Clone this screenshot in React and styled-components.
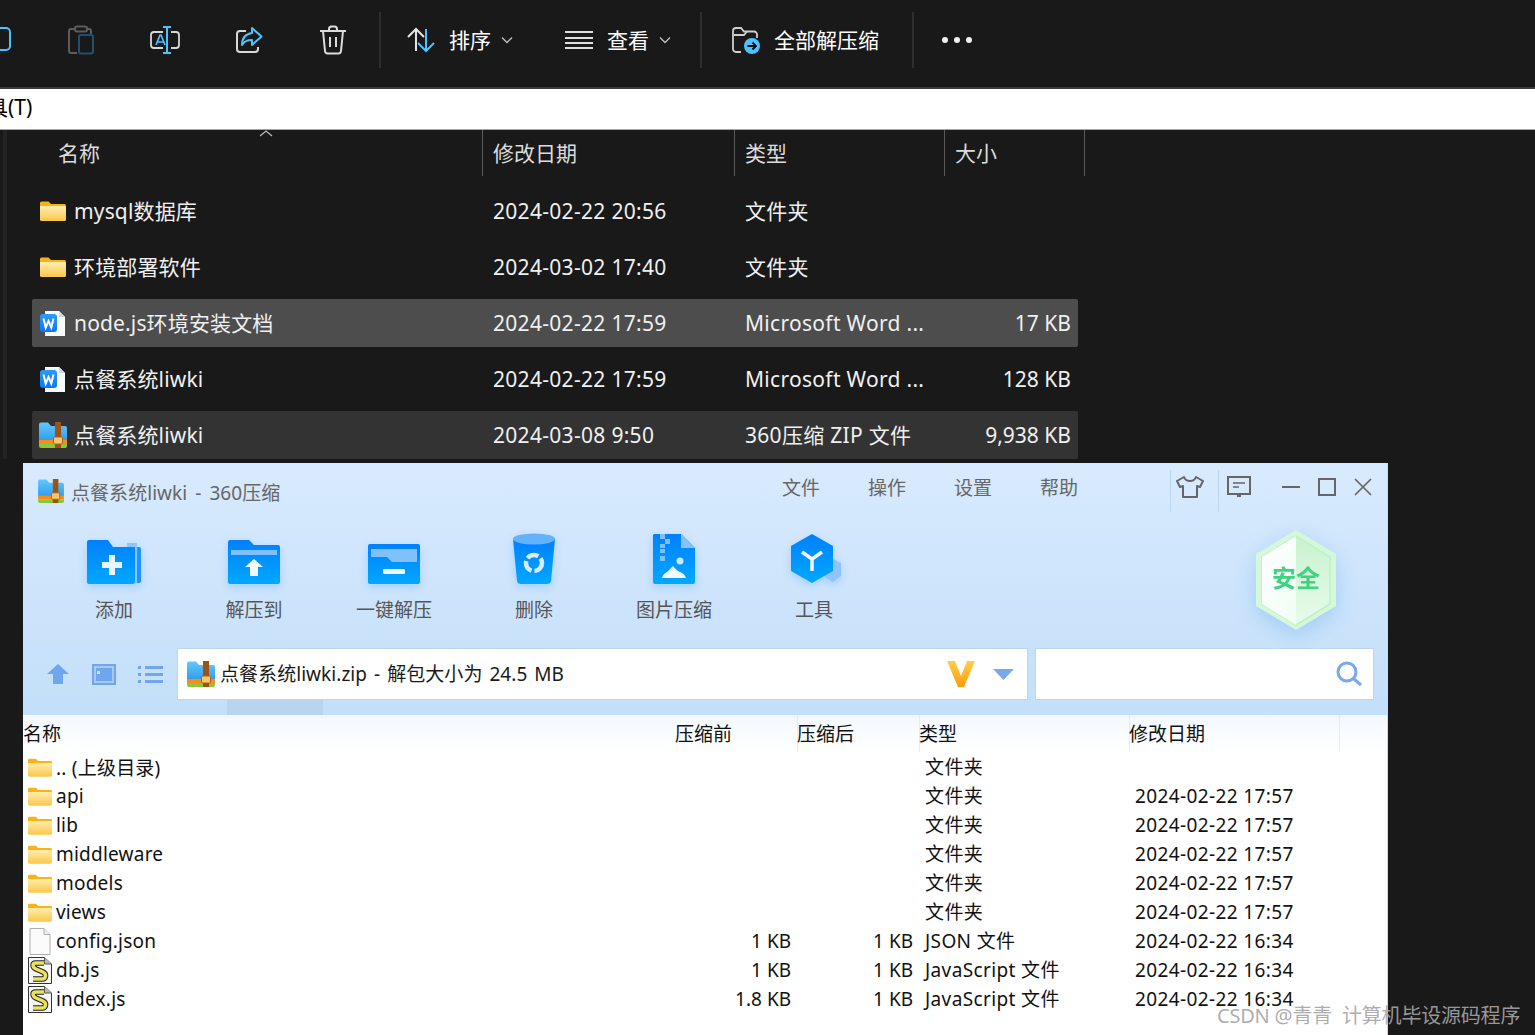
import React from "react";
import styled, { createGlobalStyle } from "styled-components";

const FONT = `"Noto Sans", "Noto Sans CJK SC", sans-serif`;

const Global = createGlobalStyle`
  html, body { margin: 0; padding: 0; background: #191919; font-family: ${FONT}; overflow: hidden; }
  * { box-sizing: border-box; }
`;

const Page = styled.div`
  position: relative;
  width: 1535px;
  height: 1035px;
  overflow: hidden;
  display: flex;
  flex-direction: column;
  background: #191919;
`;
const HiddenDefs = styled.svg`
  position: absolute;
  width: 0;
  height: 0;
`;

/* ---------- Explorer command bar ---------- */
const CommandBar = styled.div`
  height: 87px;
  padding-bottom: 7px;
  display: flex;
  align-items: center;
  margin-left: -45px;
  color: #fff;
  font-size: 21px;
  flex: none;
`;
const CommandIcon = styled.div`
  width: 84px;
  height: 40px;
  display: flex;
  align-items: center;
  justify-content: center;
  flex: none;
`;
const CommandSep = styled.div`
  width: 2px;
  height: 56px;
  background: #2e2e2e;
  margin: 0 0 0 ${p => p.$left ?? 0}px;
  flex: none;
`;
const CommandButton = styled.div`
  display: flex;
  align-items: center;
  width: ${p => p.$w}px;
  padding-left: ${p => p.$pad}px;
  height: 40px;
  flex: none;
`;
const CommandLabel = styled.span`
  margin-left: 14px;
  white-space: nowrap;
  line-height: 28px;
`;
const ChevronSlot = styled.span`
  margin-left: 10px;
  display: flex;
`;
const Dots = styled.div`
  margin-left: 28px;
  display: flex;
  gap: 6px;
`;
const Dot = styled.i`
  width: 6px;
  height: 6px;
  border-radius: 50%;
  background: #f2f2f2;
`;

/* ---------- Explorer address + list ---------- */
const MenuStrip = styled.div`
  flex: none;
  height: 43px;
  background: #fff;
  border-top: 2px solid #3a3a3a;
  border-bottom: 1px solid #a8a8a8;
  padding-bottom: 7px;
  display: flex;
  align-items: center;
  color: #000;
  font-size: 21px;
`;
const MenuText = styled.span`
  margin-left: -13px;
  white-space: nowrap;
`;
const Pane = styled.div`
  flex: none;
  height: 329px;
  margin-left: 3px;
  border-left: 4px solid #232323;
  font-size: 21px;
  color: #e8e8e8;
`;
const ColumnHead = styled.div`
  display: flex;
  height: 46px;
  position: relative;
`;
const HeadCell = styled.div`
  width: ${p => p.$w}px;
  padding-left: ${p => p.$pad}px;
  padding-bottom: 3px;
  border-right: 1px solid #5a5a5a;
  display: flex;
  align-items: center;
  color: #dcdcdc;
  flex: none;
`;
const SortCaret = styled.svg`
  position: absolute;
  left: 252px;
  top: 0;
`;
const FileRows = styled.div`
  display: flex;
  flex-direction: column;
  gap: 8px;
  padding: 11px 0 0 25px;
`;
const FileRow = styled.div`
  width: 1046px;
  height: 48px;
  display: grid;
  grid-template-columns: 461px 252px 210px 123px;
  align-items: center;
  border-radius: 2px;
  background: ${p => p.$bg || "transparent"};
  color: #f0f0f0;
`;
const NameCell = styled.div`
  display: flex;
  align-items: center;
  padding-left: 6px;
  padding-bottom: 2px;
  gap: 6px;
  white-space: nowrap;
  letter-spacing: 0.15px;
`;
const IconSlot = styled.span`
  width: 30px;
  display: flex;
  justify-content: center;
  flex: none;
  padding-top: 2px;
`;
const PlainCell = styled.div`
  white-space: nowrap;
  letter-spacing: 0.3px;
  padding-bottom: ${p => (p.$cjk ? 2 : 0)}px;
`;
const SizeCell = styled.div`
  text-align: right;
  padding-right: 7px;
  white-space: nowrap;
`;

/* ---------- 360 archive window ---------- */
const ArcWindow = styled.div`
  flex: none;
  margin: 4px 0 0 23px;
  width: 1365px;
  height: 572px;
  background: #fff;
  border-right: 1px solid #c4dcf4;
  display: flex;
  flex-direction: column;
`;
const ArcChrome = styled.div`
  height: 252px;
  flex: none;
  background: linear-gradient(180deg, #d8eafe 0%, #c3dff9 100%);
  display: flex;
  flex-direction: column;
`;
const TitleBar = styled.div`
  height: 67px;
  flex: none;
  padding: 7px 6px 0 14px;
  display: flex;
  align-items: flex-start;
  color: #666;
  font-size: 19px;
`;
const TitleGroup = styled.div`
  height: 42px;
  display: flex;
  align-items: center;
  gap: 6px;
  white-space: nowrap;
`;
const TitleText = styled.span`
  margin-top: 2px;
  letter-spacing: 0.05px;
  word-spacing: 3px;
`;
const MenuGroup = styled.div`
  margin-left: auto;
  margin-right: 44px;
  display: flex;
`;
const MenuItem = styled.div`
  width: 86px;
  height: 34px;
  display: flex;
  align-items: center;
`;
const TitleSep = styled.div`
  width: 1px;
  height: 42px;
  background: #bdd6ee;
  flex: none;
`;
const TitleCell = styled.div`
  width: ${p => p.$w}px;
  margin-right: ${p => p.$mr ?? 0}px;
  height: 34px;
  display: flex;
  align-items: center;
  justify-content: center;
  flex: none;
`;
const ToolRow = styled.div`
  height: 105px;
  flex: none;
  padding: 4px 51px 0 21px;
  display: flex;
  position: relative;
`;
const Tool = styled.div`
  width: 140px;
  display: flex;
  flex-direction: column;
  align-items: center;
  color: #555;
  font-size: 19px;
`;
const ToolIcon = styled.div`
  height: 50px;
  display: flex;
  align-items: flex-end;
  justify-content: center;
  filter: drop-shadow(0 3px 4px rgba(0, 130, 255, 0.22));
`;
const ToolLabel = styled.div`
  margin-top: 14px;
  line-height: 24px;
  white-space: nowrap;
`;
const Shield = styled.div`
  margin-left: auto;
  margin-top: -4px;
  width: 80px;
  height: 100px;
  position: relative;
  filter: drop-shadow(0 6px 10px rgba(90, 160, 235, 0.35));
`;
const ShieldText = styled.div`
  position: absolute;
  left: 0;
  right: 0;
  top: 31px;
  text-align: center;
  font-size: 24px;
  font-weight: 700;
  line-height: 34px;
  color: #3fd280;
`;
const NavBar = styled.div`
  margin-top: 13px;
  height: 52px;
  flex: none;
  padding-left: 12px;
  display: flex;
  align-items: center;
`;
const NavIcon = styled.div`
  width: 46px;
  display: flex;
  justify-content: center;
  flex: none;
`;
const PathBox = styled.div`
  margin-left: 4px;
  width: 851px;
  height: 52px;
  background: #fff;
  border: 1px solid #bcd7f2;
  display: flex;
  align-items: center;
  padding: 0 13px 0 9px;
  font-size: 19px;
  color: #1a1a1a;
  flex: none;
`;
const PathText = styled.span`
  margin-left: 5px;
  margin-bottom: 3px;
  white-space: nowrap;
  flex: 1;
  letter-spacing: 0.05px;
  word-spacing: 2px;
`;
const VBadge = styled.span`
  margin-right: 18px;
  display: flex;
`;
const SearchBox = styled.div`
  margin-left: 7px;
  width: 339px;
  height: 52px;
  background: #fff;
  border: 1px solid #bcd7f2;
  display: flex;
  align-items: center;
  justify-content: flex-end;
  padding-right: 10px;
  flex: none;
`;
const NavStrip = styled.div`
  height: 15px;
  flex: none;
  padding-left: 204px;
`;
const NavTab = styled.div`
  width: 96px;
  height: 15px;
  background: #b9d4ee;
`;
const ListHead = styled.div`
  height: 37px;
  flex: none;
  display: grid;
  grid-template-columns: 652px 122px 122px 210px 210px 1fr;
  background: linear-gradient(180deg, #f3f8fe 0%, #ffffff 100%);
  font-size: 19px;
  color: #111;
`;
const ListHeadCell = styled.div`
  display: flex;
  align-items: center;
  padding-bottom: 1px;
  box-shadow: ${p => (p.$rule ? "inset 1px 0 0 #e3edf7" : "none")};
`;
const ListRow = styled.div`
  height: 29px;
  flex: none;
  display: grid;
  grid-template-columns: 652px 122px 122px 210px 210px;
  align-items: center;
  font-size: 19px;
  color: #111;
  white-space: nowrap;
`;
const ListName = styled.div`
  display: flex;
  align-items: center;
  padding-left: 5px;
  gap: 4px;
  letter-spacing: 0.22px;
`;
const ListIcon = styled.span`
  width: 24px;
  height: 27px;
  display: flex;
  align-items: center;
  justify-content: center;
  flex: none;
`;
const ListNum = styled.div`
  text-align: right;
  padding-right: 6px;
`;
const ListText = styled.div`
  padding-left: 6px;
  padding-bottom: ${p => (p.$cjk ? 2 : 0)}px;
  letter-spacing: 0.38px;
`;
const Watermark = styled.div`
  position: absolute;
  left: 1217px;
  top: 1002px;
  font-size: 20px;
  line-height: 28px;
  letter-spacing: -0.2px;
  color: rgba(165, 165, 165, 0.92);
  white-space: pre;
`;

/* ---------- icons ---------- */
const Folder = ({ w = 26, h = 20 }) => (
  <svg width={w} height={h} viewBox="0 0 26 20">
    <path d="M0 2a1.500 1.500 0 0 1 1.500-1.500h7L11 3h13.500A1.500 1.500 0 0 1 26 4.500V8H0z" fill="#fab313" />
    <path d="M0 5h24.500A1.500 1.500 0 0 1 26 6.500v12a1.500 1.500 0 0 1-1.500 1.500h-23A1.500 1.500 0 0 1 0 18.500z" fill="url(#fold)" />
  </svg>
);
const WordDoc = () => (
  <svg width="26" height="27" viewBox="0 0 26 27">
    <path d="M5 1h14l6 6v19H5z" fill="#f8fbff" />
    <path d="M19 1l6 6h-6z" fill="#cfd8e6" />
    <rect x="0" y="4" width="17" height="18" rx="3" fill="url(#wordb)" />
    <path d="M3.500 8.500l2.200 9 2.800-6.500 2.800 6.500 2.200-9" fill="none" stroke="#fff" strokeWidth="2" />
  </svg>
);
const Zip = ({ w = 28, h = 26 }) => (
  <svg width={w} height={h} viewBox="0 0 28 26">
    <path d="M0 2.500A2 2 0 0 1 2 .5h7l3 3.500h14a2 2 0 0 1 2 2V19H0z" fill="url(#zipb)" />
    <rect x="0" y="18" width="28" height="4" fill="#ff8c12" />
    <path d="M0 22h28v2a2 2 0 0 1-2 2H2a2 2 0 0 1-2-2z" fill="#8cc63f" />
    <rect x="16" y="0" width="6" height="26" fill="#9c5316" />
    <rect x="14.500" y="15" width="9" height="7" rx="1" fill="#f5c76a" stroke="#a9601d" />
  </svg>
);
const PlainFile = () => (
  <svg width="22" height="27" viewBox="0 0 22 27">
    <path d="M1 .5h14l6 6v20H1z" fill="#fbfbfb" stroke="#aeaeae" />
    <path d="M15 .5v6h6" fill="#eee" stroke="#aeaeae" />
  </svg>
);
const ScriptFile = () => (
  <svg width="24" height="27" viewBox="0 0 24 27">
    <path d="M.5.500h16l7 6.500v19.500H.5z" fill="#f6f6f6" stroke="#333" />
    <path d="M16.500.5v6.500h7" fill="#bbb" stroke="#555" />
    <path d="M16 6H8C4 6 4 10 8 12l7 3c4 2 3 7-1 7H5" fill="none" stroke="#222" strokeWidth="5.500" />
    <path d="M16 6H8C4 6 4 10 8 12l7 3c4 2 3 7-1 7H5" fill="none" stroke="#e9e25a" strokeWidth="3.500" />
  </svg>
);
const Paste = () => (
  <svg width="28" height="30" viewBox="0 0 28 30" fill="none">
    <path d="M8 4H4a2 2 0 0 0-2 2v20a2 2 0 0 0 2 2h6M20 4h2a2 2 0 0 1 2 2v3" stroke="#5c5c5c" strokeWidth="2" />
    <rect x="8" y="1.500" width="12" height="5" rx="2" stroke="#5c5c5c" strokeWidth="2" />
    <rect x="12" y="10" width="14" height="18.500" rx="2" stroke="#22506f" strokeWidth="2" />
  </svg>
);
const Rename = () => (
  <svg width="30" height="30" viewBox="0 0 30 30" fill="none">
    <path d="M13 7H4a3 3 0 0 0-3 3v10a3 3 0 0 0 3 3h9M21 7h5a3 3 0 0 1 3 3v10a3 3 0 0 1-3 3h-5" stroke="#d8d8d8" strokeWidth="1.800" />
    <path d="M13 2h8M13 28h8M17 2v26" stroke="#4cc2ff" strokeWidth="2" />
    <path d="M6 20l4-10h1l4 10M7.500 17h6" stroke="#4cc2ff" strokeWidth="1.700" />
  </svg>
);
const Share = () => (
  <svg width="28" height="28" viewBox="0 0 28 28" fill="none">
    <path d="M11 5H5a3 3 0 0 0-3 3v15a3 3 0 0 0 3 3h15a3 3 0 0 0 3-3v-2" stroke="#d8d8d8" strokeWidth="2" />
    <path d="M17 2l9.500 8.500L17 19v-5c-5 0-8 1.500-10 5 0-6 3-11 10-12z" stroke="#4cc2ff" strokeWidth="2" strokeLinejoin="round" />
  </svg>
);
const Trash = () => (
  <svg width="28" height="30" viewBox="0 0 28 30" fill="none" stroke="#dcdcdc" strokeWidth="2">
    <path d="M1 6h26M10 6V4a2.500 2.500 0 0 1 2.500-2.500h3A2.500 2.500 0 0 1 18 4v2" />
    <path d="M4 6l2 20a2.500 2.500 0 0 0 2.500 2.500h11A2.500 2.500 0 0 0 22 26l2-20" />
    <path d="M11 12v10M17 12v10" />
  </svg>
);
const Sort = () => (
  <svg width="28" height="26" viewBox="0 0 28 26" fill="none" strokeWidth="2">
    <path d="M1 10l8-8 8 8M9 2v22" stroke="#e4e4e4" />
    <path d="M11 16l8 8 8-8M19 2v22" stroke="#4cc2ff" />
  </svg>
);
const Lines = () => (
  <svg width="28" height="18" viewBox="0 0 28 18" stroke="#e0e0e0" strokeWidth="2">
    <path d="M0 1h28M0 7h28M0 12h28M0 17h28" />
  </svg>
);
const Chevron = () => (
  <svg width="12" height="8" viewBox="0 0 12 8" fill="none" stroke="#bdbdbd" strokeWidth="1.400">
    <path d="M1 1.500l5 5 5-5" />
  </svg>
);
const Extract = () => (
  <svg width="28" height="27" viewBox="0 0 28 27" fill="none">
    <path d="M9 25H4a3 3 0 0 1-3-3V4a3 3 0 0 1 3-3h5l3 3.500h10a3 3 0 0 1 3 3V11" stroke="#cfcfcf" strokeWidth="1.800" />
    <path d="M2 8h10l3-3.500" stroke="#cfcfcf" strokeWidth="1.800" />
    <circle cx="20" cy="19" r="8" fill="#4cc2ff" />
    <path d="M15.500 19h8M20.500 15.500l3.500 3.500-3.500 3.500" stroke="#0c0c0c" strokeWidth="1.800" />
  </svg>
);
const AddFolder = () => (
  <svg width="54" height="44" viewBox="0 0 54 44">
    <rect x="42" y="7" width="12" height="36" rx="2" fill="#1f93ff" />
    <path d="M40 3h10v40h-8z" fill="#8dc5fb" />
    <path d="M0 2a2 2 0 0 1 2-2h19l5 7h22v35a2 2 0 0 1-2 2H2a2 2 0 0 1-2-2z" fill="url(#tool)" />
    <path d="M22 15h6v7h7v6h-7v7h-6v-7h-7v-6h7z" fill="#e8f4ff" />
  </svg>
);
const UnpackTo = () => (
  <svg width="52" height="44" viewBox="0 0 52 44">
    <path d="M0 2a2 2 0 0 1 2-2h19l5 5h24a2 2 0 0 1 2 2v35a2 2 0 0 1-2 2H2a2 2 0 0 1-2-2z" fill="url(#tool)" />
    <rect x="3" y="10" width="46" height="5" fill="#7fc0fc" />
    <path d="M26 19l9 8h-5v9h-8v-9h-5z" fill="#f2f9ff" />
  </svg>
);
const OneKey = () => (
  <svg width="52" height="40" viewBox="0 0 52 40">
    <rect width="52" height="40" rx="2" fill="url(#tool)" />
    <path d="M3 5h46v13H24l-5-5H3z" fill="#80c0fb" />
    <rect x="15" y="25" width="22" height="5" rx="1" fill="#eef7ff" />
  </svg>
);
const Bin = () => (
  <svg width="42" height="51" viewBox="0 0 42 51">
    <path d="M0 6h42l-4 42a4 4 0 0 1-4 3H8a4 4 0 0 1-4-3z" fill="url(#tool)" />
    <ellipse cx="21" cy="6" rx="21" ry="5.500" fill="#63b2fb" />
    <circle cx="21" cy="30" r="8" fill="none" stroke="#d8ecff" strokeWidth="4.500" strokeDasharray="12 3" />
  </svg>
);
const ImageZip = () => (
  <svg width="42" height="50" viewBox="0 0 42 50">
    <path d="M1 0h27l14 14v34a2 2 0 0 1-2 2H2a2 2 0 0 1-2-2V1z" fill="url(#tool)" />
    <path d="M28 0l14 14H28z" fill="#85c1fa" />
    <path d="M7 0h5v5H7zM12 5h5v5h-5zM7 10h5v5H7zM12 14h-5v5h5zM7 22h5v5H7z" fill="#7fc0fc" />
    <circle cx="27" cy="27" r="3.500" fill="#cfe7ff" />
    <path d="M9 44c2-6 5-5 7-8l4-4c2 2 4 5 7 6 3 1 5 3 6 6z" fill="#f2f9ff" />
  </svg>
);
const Hex = () => (
  <svg width="54" height="50" viewBox="-4 0 54 50">
    <path d="M42 25l8 4v13l-8 6-10-6z" fill="#8fc4fa" />
    <path d="M21 0l21 12v25L21 49 0 37V12z" fill="url(#tool)" />
    <path d="M11 18l10 7 10-7M21 25v12" fill="none" stroke="#f2f9ff" strokeWidth="3.500" />
  </svg>
);
const ShieldArt = () => (
  <svg width="80" height="100" viewBox="0 0 80 100">
    <path d="M40 0l40 24v52L40 100 0 76V24z" fill="#d6f8da" />
    <path d="M40 6L74 27v47L40 95 6 74V27z" fill="url(#shieldr)" stroke="#bff0c6" strokeWidth="1.500" />
    <path d="M40 6L6 27v47l34 21z" fill="url(#shieldl)" />
  </svg>
);
const Shirt = () => (
  <svg width="28" height="24" viewBox="0 0 28 24" fill="none" stroke="#666" strokeWidth="2">
    <path d="M8 2L1 6l3 6 3-1v11h14V11l3 1 3-6-7-4c-1 3-3 4-6 4s-5-1-6-4z" strokeLinejoin="round" />
  </svg>
);
const Message = () => (
  <svg width="24" height="22" viewBox="0 0 24 22" fill="none" stroke="#666" strokeWidth="2">
    <path d="M1 1h22v17H1z" />
    <path d="M6 7h12M6 11h6" strokeWidth="1.500" />
    <path d="M10 20h4" />
  </svg>
);
const Minimize = () => <svg width="18" height="4" viewBox="0 0 18 4"><path d="M0 2h18" stroke="#666" strokeWidth="2" /></svg>;
const Maximize = () => <svg width="18" height="18" viewBox="0 0 18 18"><rect x="1" y="1" width="16" height="16" fill="none" stroke="#666" strokeWidth="2" /></svg>;
const CloseX = () => <svg width="18" height="18" viewBox="0 0 18 18"><path d="M1 1l16 16M17 1L1 17" stroke="#666" strokeWidth="1.700" /></svg>;
const NavUp = () => <svg width="22" height="20" viewBox="0 0 22 20"><path d="M11 0l11 10h-6v10H6V10H0z" fill="#6fa6ee" /></svg>;
const NavBox = () => (
  <svg width="24" height="21" viewBox="0 0 24 21">
    <rect x="1" y="1" width="22" height="19" fill="#a9c9f5" stroke="#6fa6ee" strokeWidth="2" />
    <rect x="4" y="4" width="16" height="13" fill="#6fa6ee" />
    <rect x="5" y="7" width="3" height="3" fill="#cfe2fa" />
  </svg>
);
const NavList = () => (
  <svg width="25" height="19" viewBox="0 0 25 19" fill="#6fa6ee">
    <path d="M0 1h3v3H0zM7 1h18v3H7zM0 8h3v3H0zM7 8h18v3H7zM0 15h3v3H0zM7 15h18v3H7z" />
  </svg>
);
const VMark = () => <svg width="28" height="26" viewBox="0 0 28 26"><path d="M0 0h8l6 15L20 0h8L17 26h-6z" fill="url(#vee)" /></svg>;
const DropArrow = () => <svg width="21" height="11" viewBox="0 0 21 11"><path d="M0 0h21L10.500 11z" fill="#7aa9ea" /></svg>;
const Lens = () => (
  <svg width="27" height="26" viewBox="0 0 27 26" fill="none" stroke="#79a8ec" strokeWidth="3">
    <circle cx="11" cy="11" r="9" />
    <path d="M18 18l7 6" />
  </svg>
);

/* ---------- data ---------- */
const FILES = [
  { icon: <Folder />, name: "mysql数据库", date: "2024-02-22 20:56", type: "文件夹", cjk: true, size: "" },
  { icon: <Folder />, name: "环境部署软件", date: "2024-03-02 17:40", type: "文件夹", cjk: true, size: "" },
  { icon: <WordDoc />, name: "node.js环境安装文档", date: "2024-02-22 17:59", type: "Microsoft Word ...", size: "17 KB", bg: "#4d4d4d" },
  { icon: <WordDoc />, name: "点餐系统liwki", date: "2024-02-22 17:59", type: "Microsoft Word ...", size: "128 KB" },
  { icon: <Zip />, name: "点餐系统liwki", date: "2024-03-08 9:50", type: "360压缩 ZIP 文件", cjk: true, size: "9,938 KB", bg: "#333333" },
];
const TOOLS = [
  { icon: <AddFolder />, label: "添加" },
  { icon: <UnpackTo />, label: "解压到" },
  { icon: <OneKey />, label: "一键解压" },
  { icon: <Bin />, label: "删除" },
  { icon: <ImageZip />, label: "图片压缩" },
  { icon: <Hex />, label: "工具" },
];
const small = <Folder w={24} h={19} />;
const ENTRIES = [
  { icon: small, name: ".. (上级目录)", type: "文件夹" },
  { icon: small, name: "api", type: "文件夹", date: "2024-02-22 17:57" },
  { icon: small, name: "lib", type: "文件夹", date: "2024-02-22 17:57" },
  { icon: small, name: "middleware", type: "文件夹", date: "2024-02-22 17:57" },
  { icon: small, name: "models", type: "文件夹", date: "2024-02-22 17:57" },
  { icon: small, name: "views", type: "文件夹", date: "2024-02-22 17:57" },
  { icon: <PlainFile />, name: "config.json", before: "1 KB", after: "1 KB", type: "JSON 文件", date: "2024-02-22 16:34" },
  { icon: <ScriptFile />, name: "db.js", before: "1 KB", after: "1 KB", type: "JavaScript 文件", date: "2024-02-22 16:34" },
  { icon: <ScriptFile />, name: "index.js", before: "1.8 KB", after: "1 KB", type: "JavaScript 文件", date: "2024-02-22 16:34" },
];

export default function App() {
  return (
    <Page>
      <Global />
      <HiddenDefs>
        <defs>
          <linearGradient id="fold" x1="0" y1="0" x2="0" y2="1"><stop offset="0" stopColor="#ffeeb0" /><stop offset="1" stopColor="#fcc64a" /></linearGradient>
          <linearGradient id="wordb" x1="0" y1="0" x2="0" y2="1"><stop offset="0" stopColor="#2b9aff" /><stop offset="1" stopColor="#0a78f5" /></linearGradient>
          <linearGradient id="zipb" x1="0" y1="0" x2="0" y2="1"><stop offset="0" stopColor="#63c8fb" /><stop offset="1" stopColor="#2f9cf0" /></linearGradient>
          <linearGradient id="tool" x1="0" y1="0" x2="0" y2="1"><stop offset="0" stopColor="#0080ff" /><stop offset="1" stopColor="#00a8ff" /></linearGradient>
          <linearGradient id="shieldl" x1="0" y1="0" x2="1" y2="1"><stop offset="0" stopColor="#ffffff" /><stop offset="1" stopColor="#f1fdf3" /></linearGradient>
          <linearGradient id="shieldr" x1="0" y1="0" x2="0" y2="1"><stop offset="0" stopColor="#c8f2d0" /><stop offset="1" stopColor="#e8fbea" /></linearGradient>
          <linearGradient id="vee" x1="0" y1="0" x2="0" y2="1"><stop offset="0" stopColor="#ffcf4a" /><stop offset="1" stopColor="#ff9a0a" /></linearGradient>
        </defs>
      </HiddenDefs>

      <CommandBar>
        <CommandIcon>
          <svg width="28" height="26" viewBox="0 0 28 26" fill="none"><rect x="1" y="1" width="26" height="22" rx="4" stroke="#4cc2ff" strokeWidth="2" /></svg>
        </CommandIcon>
        <CommandIcon><Paste /></CommandIcon>
        <CommandIcon><Rename /></CommandIcon>
        <CommandIcon><Share /></CommandIcon>
        <CommandIcon><Trash /></CommandIcon>
        <CommandSep $left={4} />
        <CommandButton $w={184} $pad={26}>
          <Sort /><CommandLabel>排序</CommandLabel><ChevronSlot><Chevron /></ChevronSlot>
        </CommandButton>
        <CommandButton $w={135} $pad={0}>
          <Lines /><CommandLabel>查看</CommandLabel><ChevronSlot><Chevron /></ChevronSlot>
        </CommandButton>
        <CommandSep />
        <CommandButton $w={210} $pad={30}>
          <Extract /><CommandLabel>全部解压缩</CommandLabel>
        </CommandButton>
        <CommandSep />
        <Dots><Dot /><Dot /><Dot /></Dots>
      </CommandBar>

      <MenuStrip><MenuText>具(T)</MenuText></MenuStrip>

      <Pane>
        <ColumnHead>
          <HeadCell $w={476} $pad={51}>名称</HeadCell>
          <SortCaret width="14" height="7" viewBox="0 0 14 7" fill="none" stroke="#b8b8b8" strokeWidth="1.300"><path d="M1 6l6-5 6 5" /></SortCaret>
          <HeadCell $w={252} $pad={10}>修改日期</HeadCell>
          <HeadCell $w={210} $pad={10}>类型</HeadCell>
          <HeadCell $w={140} $pad={10}>大小</HeadCell>
        </ColumnHead>
        <FileRows>
          {FILES.map((f, i) => (
            <FileRow key={i} $bg={f.bg}>
              <NameCell><IconSlot>{f.icon}</IconSlot>{f.name}</NameCell>
              <PlainCell>{f.date}</PlainCell>
              <PlainCell $cjk={f.cjk}>{f.type}</PlainCell>
              <SizeCell>{f.size}</SizeCell>
            </FileRow>
          ))}
        </FileRows>
      </Pane>

      <ArcWindow>
        <ArcChrome>
          <TitleBar>
            <TitleGroup><Zip w={28} h={24} /><TitleText>点餐系统liwki - 360压缩</TitleText></TitleGroup>
            <MenuGroup>
              {["文件", "操作", "设置", "帮助"].map(m => <MenuItem key={m}>{m}</MenuItem>)}
            </MenuGroup>
            <TitleSep />
            <TitleCell $w={38} $mr={9}><Shirt /></TitleCell>
            <TitleSep />
            <TitleCell $w={40} $mr={14}><Message /></TitleCell>
            <TitleCell $w={36}><Minimize /></TitleCell>
            <TitleCell $w={36}><Maximize /></TitleCell>
            <TitleCell $w={36}><CloseX /></TitleCell>
          </TitleBar>
          <ToolRow>
            {TOOLS.map(t => (
              <Tool key={t.label}>
                <ToolIcon>{t.icon}</ToolIcon>
                <ToolLabel>{t.label}</ToolLabel>
              </Tool>
            ))}
            <Shield><ShieldArt /><ShieldText>安全</ShieldText></Shield>
          </ToolRow>
          <NavBar>
            <NavIcon><NavUp /></NavIcon>
            <NavIcon><NavBox /></NavIcon>
            <NavIcon><NavList /></NavIcon>
            <PathBox>
              <Zip w={28} h={26} />
              <PathText>点餐系统liwki.zip - 解包大小为 24.5 MB</PathText>
              <VBadge><VMark /></VBadge>
              <DropArrow />
            </PathBox>
            <SearchBox><Lens /></SearchBox>
          </NavBar>
          <NavStrip><NavTab /></NavStrip>
        </ArcChrome>

        <ListHead>
          <ListHeadCell>名称</ListHeadCell>
          <ListHeadCell>压缩前</ListHeadCell>
          <ListHeadCell $rule>压缩后</ListHeadCell>
          <ListHeadCell $rule>类型</ListHeadCell>
          <ListHeadCell $rule>修改日期</ListHeadCell>
          <ListHeadCell $rule />
        </ListHead>
        {ENTRIES.map(e => (
          <ListRow key={e.name}>
            <ListName><ListIcon>{e.icon}</ListIcon>{e.name}</ListName>
            <ListNum>{e.before}</ListNum>
            <ListNum>{e.after}</ListNum>
            <ListText $cjk>{e.type}</ListText>
            <ListText>{e.date}</ListText>
          </ListRow>
        ))}
      </ArcWindow>

      <Watermark>{"CSDN @青青  计算机毕设源码程序"}</Watermark>
    </Page>
  );
}
